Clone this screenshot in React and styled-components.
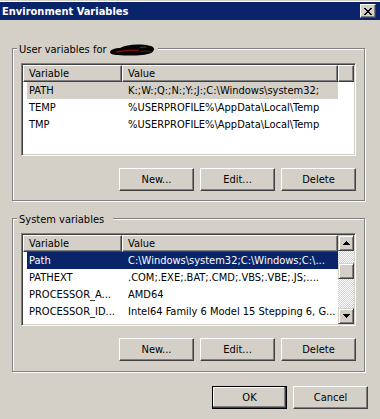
import React from "react";
import styled, { createGlobalStyle } from "styled-components";

const GlobalStyle = createGlobalStyle`
  html, body {
    margin: 0;
    padding: 0;
    background: #d4d0c8;
  }
  body {
    font-family: "DejaVu Sans Condensed", "Liberation Sans", sans-serif;
    font-size: 11px;
    color: #000;
  }
`;

const Window = styled.div`
  width: 380px;
  height: 419px;
  box-sizing: border-box;
  padding-top: 1px;
  border-top: 1px solid #d4d0c8;
  box-shadow: inset 0 1px #fff;
  background: #d4d0c8;
  overflow: hidden;
`;

const TitleBar = styled.div`
  height: 18px;
  display: flex;
  align-items: center;
  justify-content: space-between;
  padding: 0 4px 0 2px;
  background: #0a246a;
  color: #fff;
  font-weight: bold;
  white-space: nowrap;
`;

const CloseButton = styled.button`
  width: 16px;
  height: 14px;
  box-sizing: border-box;
  padding: 0;
  display: flex;
  align-items: center;
  justify-content: center;
  background: #d4d0c8;
  border: 1px solid;
  border-color: #fff #404040 #404040 #fff;
  box-shadow: inset -1px -1px #808080;
`;

const Body = styled.div`
  padding: 0 12px;
`;

const Group = styled.section`
  width: 353px;
  box-sizing: border-box;
  margin-top: ${p => p.$top}px;
  padding: 0 8px ${p => p.$bottom}px;
  border: 1px solid #808080;
  box-shadow: inset 1px 1px #fff, 1px 1px #fff;
`;

const Caption = styled.div`
  display: flex;
  align-items: center;
  width: fit-content;
  height: 13px;
  line-height: 13px;
  margin: -6px 0 0 -4px;
  padding: 0 ${p => p.$right}px 0 2px;
  background: #d4d0c8;
  white-space: nowrap;
`;

const Redacted = styled.svg`
  margin: 1px 0 0 3px;
  flex: none;
`;

const ListView = styled.div`
  height: 93px;
  box-sizing: border-box;
  margin-top: 7px;
  padding: 1px;
  display: flex;
  background: #fff;
  border: 1px solid;
  border-color: #808080 #fff #fff #808080;
  box-shadow: inset 1px 1px #404040, inset -1px -1px #d4d0c8;
  overflow: hidden;
`;

const ListContent = styled.div`
  flex: 1;
  min-width: 0;
`;

const Header = styled.div`
  display: grid;
  grid-template-columns: 99px 216px 1fr;
  height: 17px;
`;

const HeaderCell = styled.div`
  box-sizing: border-box;
  height: 17px;
  line-height: 15px;
  padding-left: 5px;
  background: #d4d0c8;
  border-top: 1px solid #fff;
  border-left: 1px solid #fff;
  border-right: 1px solid #404040;
  border-bottom: 1px solid #404040;
  box-shadow: inset -1px -1px #808080;
`;

const rowColors = {
  focus: { bg: "#0a246a", fg: "#fff" },
  inactive: { bg: "#d4d0c8", fg: "#000" },
  none: { bg: "transparent", fg: "#000" },
};

const Row = styled.div`
  display: grid;
  grid-template-columns: 95px 216px;
  width: fit-content;
  height: 17px;
  line-height: 17px;
  margin-left: 4px;
  background: ${p => rowColors[p.$state].bg};
  color: ${p => rowColors[p.$state].fg};
`;

const Cell = styled.div`
  padding-left: ${p => (p.$first ? 2 : 6)}px;
  white-space: nowrap;
  overflow: hidden;
`;

const ScrollBar = styled.div`
  width: 16px;
  display: flex;
  flex-direction: column;
  flex: none;
`;

const ScrollButton = styled.div`
  width: 16px;
  height: 16px;
  box-sizing: border-box;
  display: flex;
  align-items: center;
  justify-content: center;
  flex: none;
  background: #d4d0c8;
  border: 1px solid;
  border-color: #d4d0c8 #404040 #404040 #d4d0c8;
  box-shadow: inset 1px 1px #fff, inset -1px -1px #808080;
`;

const Track = styled.div`
  flex: 1;
  background-color: #d4d0c8;
  background-image: conic-gradient(#fff 25%, #d4d0c8 0 50%, #fff 0 75%, #d4d0c8 0);
  background-size: 2px 2px;
`;

const Thumb = styled(ScrollButton)`
  margin-top: 12px;
`;

const ButtonRow = styled.div`
  display: flex;
  justify-content: flex-end;
  gap: 6px;
  margin-top: ${p => p.$top}px;
`;

const PushButton = styled.button`
  width: 75px;
  height: 23px;
  box-sizing: border-box;
  padding: 0;
  font: inherit;
  color: #000;
  background: #d4d0c8;
  border: 1px solid;
  border-color: ${p => (p.$default ? "#000" : "#fff #404040 #404040 #fff")};
  box-shadow: ${p =>
    p.$default
      ? "inset -1px -1px #404040, inset -2px -2px #808080, inset 1px 1px #fff"
      : "inset -1px -1px #808080"};
`;

const CloseGlyph = () => (
  <svg width="8" height="7" viewBox="0 0 8 7" shapeRendering="crispEdges">
    <path
      d="M0 0h2v1H0zM6 0h2v1H6zM1 1h2v1H1zM5 1h2v1H5zM2 2h4v1H2zM3 3h2v1H3zM2 4h4v1H2zM1 5h2v1H1zM5 5h2v1H5zM0 6h2v1H0zM6 6h2v1H6z"
      fill="#000"
    />
  </svg>
);

const Arrow = ({ down }) => (
  <svg width="7" height="4" viewBox="0 0 7 4" shapeRendering="crispEdges">
    <path d={down ? "M0 0h7v1H0zM1 1h5v1H1zM2 2h3v1H2zM3 3h1v1H3z" : "M3 0h1v1H3zM2 1h3v1H2zM1 2h5v1H1zM0 3h7v1H0z"} fill="#000" />
  </svg>
);

// hand-drawn marker scribble hiding the user name
const Scribble = () => (
  <Redacted width="44" height="12" viewBox="0 0 44 12">
    <path
      d="M0 8C1 5 6 4 10 4C14 2 20 0.5 28 0.5C36 0.5 43 1.5 44 4.5C44.5 8 40 10.5 32 11C24 12 14 11.5 8 11C3 10.8 0 10 0 8Z"
      fill="#050505"
    />
    <path d="M6 8C12 6.5 20 6 29 6.5" stroke="#7a0c0c" strokeWidth="1.4" fill="none" />
    <path d="M30 7.5C34 7 37 7 41 7.5" stroke="#5a1010" strokeWidth="1.1" fill="none" />
    <path d="M30 3.5C32 3 34 3 36 3.6" stroke="#444" strokeWidth="1" fill="none" />
  </Redacted>
);

const userVars = [
  ["PATH", "K:;W:;Q:;N:;Y:;J:;C:\\Windows\\system32;", "inactive"],
  ["TEMP", "%USERPROFILE%\\AppData\\Local\\Temp", "none"],
  ["TMP", "%USERPROFILE%\\AppData\\Local\\Temp", "none"],
];

const systemVars = [
  ["Path", "C:\\Windows\\system32;C:\\Windows;C:\\...", "focus"],
  ["PATHEXT", ".COM;.EXE;.BAT;.CMD;.VBS;.VBE;.JS;....", "none"],
  ["PROCESSOR_A...", "AMD64", "none"],
  ["PROCESSOR_ID...", "Intel64 Family 6 Model 15 Stepping 6, G...", "none"],
];

const VarRows = ({ rows }) =>
  rows.map(([name, value, state]) => (
    <Row key={name} $state={state}>
      <Cell $first>{name}</Cell>
      <Cell>{value}</Cell>
    </Row>
  ));

const EditButtons = ({ top }) => (
  <ButtonRow $top={top}>
    <PushButton>New...</PushButton>
    <PushButton>Edit...</PushButton>
    <PushButton>Delete</PushButton>
  </ButtonRow>
);

export default function App() {
  return (
    <Window>
      <GlobalStyle />
      <TitleBar>
        <span>Environment Variables</span>
        <CloseButton aria-label="Close">
          <CloseGlyph />
        </CloseButton>
      </TitleBar>
      <Body>
        <Group $top={28} $bottom={9}>
          <Caption $right={4}>
            User variables for
            <Scribble />
          </Caption>
          <ListView>
            <ListContent>
              <Header>
                <HeaderCell>Variable</HeaderCell>
                <HeaderCell>Value</HeaderCell>
                <HeaderCell />
              </Header>
              <VarRows rows={userVars} />
            </ListContent>
          </ListView>
          <EditButtons top={12} />
        </Group>

        <Group $top={17} $bottom={10}>
          <Caption $right={9}>System variables</Caption>
          <ListView>
            <ListContent>
              <Header>
                <HeaderCell>Variable</HeaderCell>
                <HeaderCell>Value</HeaderCell>
              </Header>
              <VarRows rows={systemVars} />
            </ListContent>
            <ScrollBar>
              <ScrollButton>
                <Arrow />
              </ScrollButton>
              <Track>
                <Thumb />
              </Track>
              <ScrollButton>
                <Arrow down />
              </ScrollButton>
            </ScrollBar>
          </ListView>
          <EditButtons top={12} />
        </Group>

        <ButtonRow $top={14}>
          <PushButton $default>OK</PushButton>
          <PushButton>Cancel</PushButton>
        </ButtonRow>
      </Body>
    </Window>
  );
}
